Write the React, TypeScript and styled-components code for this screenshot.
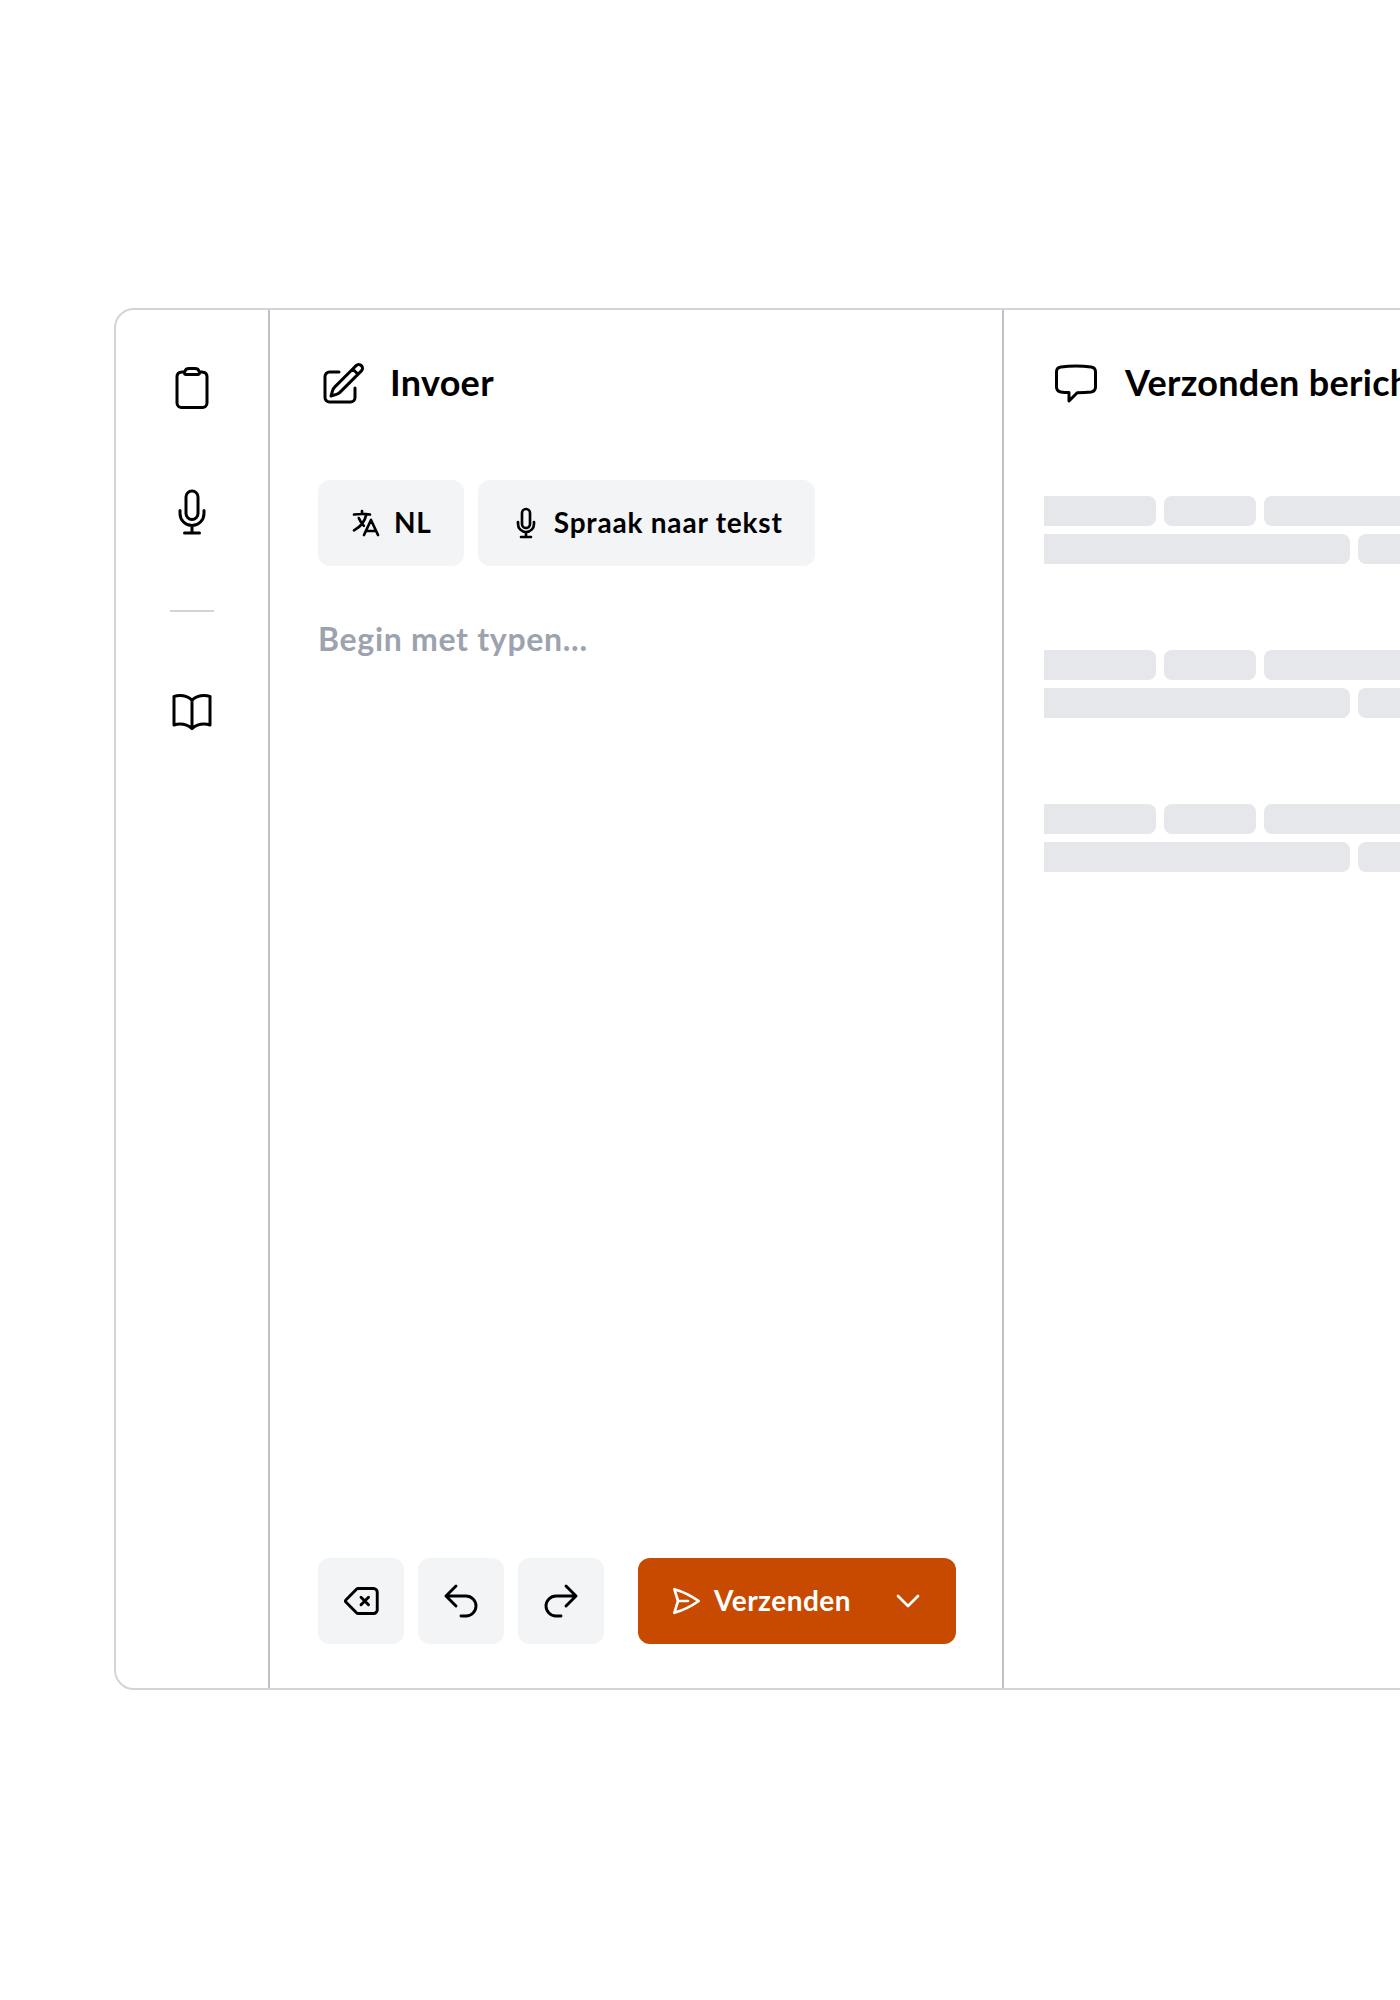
import { ReactNode } from 'react';
import styled, { createGlobalStyle } from 'styled-components';
import {
  HiOutlineArrowUturnLeft,
  HiOutlineArrowUturnRight,
  HiOutlineBackspace,
  HiOutlineBookOpen,
  HiOutlineChevronDown,
  HiOutlineClipboard,
  HiOutlineLanguage,
  HiOutlineMicrophone,
  HiOutlinePaperAirplane,
  HiOutlinePencilSquare,
} from 'react-icons/hi2';

const GlobalStyle = createGlobalStyle`
  html, body {
    margin: 0;
    height: 2000px;
    overflow: hidden;
    background: #fff;
  }
  body {
    font-family: "Lato", "Noto Sans", sans-serif;
    color: #000;
  }
`;

const Page = styled.div`
  padding: 308px 0 0 114px;
`;

const Card = styled.div`
  display: flex;
  width: 1500px;
  height: 1382px;
  box-sizing: border-box;
  border: 2px solid #d1d5db;
  border-radius: 20px;
  overflow: hidden;
`;

const Sidebar = styled.nav`
  flex: 0 0 152px;
  display: flex;
  flex-direction: column;
  align-items: center;
  gap: 76px;
  padding-top: 54px;
  border-right: 2px solid #c0c1c4;
  svg {
    display: block;
    font-size: 48px;
  }
`;

const SidebarRule = styled.hr`
  width: 44px;
  height: 2px;
  margin: -2px 0 0;
  border: 0;
  background: #d1d5db;
`;

const InputPanel = styled.section`
  flex: 0 0 732px;
  box-sizing: border-box;
  display: flex;
  flex-direction: column;
  padding: 48px 46px 44px 48px;
  border-right: 2px solid #c0c1c4;
`;

const MessagesPanel = styled.section`
  flex: 1;
  min-width: 0;
  padding: 48px 0 0 40px;
`;

const Header = styled.header<{ $inset?: boolean }>`
  display: flex;
  align-items: center;
  gap: ${(p) => (p.$inset ? '25px' : '24px')};
  height: 48px;
  margin-left: ${(p) => (p.$inset ? '8px' : '0')};
  svg {
    flex: none;
    font-size: 48px;
  }
`;

const PencilIcon = styled(HiOutlinePencilSquare)`
  transform: translate(1px, 2px);
`;

const Title = styled.h2`
  margin: 0;
  font-size: 36px;
  font-weight: 700;
  line-height: 48px;
  letter-spacing: 0.3px;
  white-space: nowrap;
`;

const Pills = styled.div`
  display: flex;
  gap: 14px;
  margin-top: 74px;
`;

const Pill = styled.button`
  display: flex;
  align-items: center;
  gap: 12px;
  height: 86px;
  padding: 0 32px;
  border: 0;
  border-radius: 12px;
  background: #f3f4f6;
  font: 700 28px "Lato", sans-serif;
  letter-spacing: 0.8px;
  color: #000;
  svg {
    font-size: 32px;
    stroke-width: 2;
  }
`;

const ButtonLabel = styled.span`
  margin-top: -2px;
`;

const Placeholder = styled.div`
  margin-top: 53px;
  font-size: 32px;
  font-weight: 700;
  line-height: 40px;
  letter-spacing: 0.7px;
  color: #9ca3af;
`;

const Toolbar = styled.div`
  display: flex;
  gap: 14px;
  margin-top: auto;
`;

const IconButton = styled.button`
  display: flex;
  align-items: center;
  justify-content: center;
  width: 86px;
  height: 86px;
  padding: 0;
  border: 0;
  border-radius: 12px;
  background: #f3f4f6;
  color: #000;
  svg {
    font-size: 40px;
    stroke-width: 1.75;
  }
`;

const SendButton = styled.button`
  display: flex;
  align-items: center;
  width: 318px;
  height: 86px;
  margin-left: 20px;
  padding: 0 32px;
  box-sizing: border-box;
  border: 0;
  border-radius: 12px;
  background: #c74a00;
  color: #fff;
  font: 700 28px "Lato", sans-serif;
  letter-spacing: 0.5px;
  svg {
    flex: none;
    font-size: 32px;
    stroke-width: 2;
  }
`;

const SendLabel = styled(ButtonLabel)`
  margin-left: 12px;
  margin-right: auto;
`;

const Skeletons = styled.div`
  display: flex;
  flex-direction: column;
  gap: 86px;
  margin-top: 90px;
`;

const SkeletonGroup = styled.div`
  display: flex;
  flex-direction: column;
  gap: 8px;
`;

const SkeletonRow = styled.div`
  display: flex;
  gap: 8px;
`;

const SkeletonBar = styled.div<{ $width: number }>`
  flex: 0 0 ${(p) => p.$width}px;
  height: 30px;
  border-radius: 8px;
  background: #e5e7eb;
  &:first-child {
    border-radius: 0 8px 8px 0;
  }
`;

const skeletonRows = [
  [112, 92, 300],
  [306, 200],
];

function Skeleton() {
  return (
    <SkeletonGroup>
      {skeletonRows.map((row, i) => (
        <SkeletonRow key={i}>
          {row.map((w, j) => (
            <SkeletonBar key={j} $width={w} />
          ))}
        </SkeletonRow>
      ))}
    </SkeletonGroup>
  );
}

function Tool({ children }: { children: ReactNode }) {
  return <IconButton type="button">{children}</IconButton>;
}

// speech bubble with the tail left of centre, the hi2 ones have it elsewhere
function BubbleIcon() {
  return (
    <svg width="1em" height="1em" viewBox="0 0 24 24" fill="none" stroke="currentColor" strokeWidth="1.5" strokeLinejoin="round">
      <path d="M8.5 17.3c-1.4-.05-2.8-.15-4.1-.35C3.1 16.75 2.25 15.7 2.25 14.5V7c0-1.2.85-2.25 2.15-2.45C6.9 4.2 9.4 4 12 4s5.1.2 7.6.55c1.3.2 2.15 1.25 2.15 2.45v7.5c0 1.2-.85 2.25-2.15 2.45-2.3.3-4.6.4-7 .4L8.5 21.5z" />
    </svg>
  );
}

export default function App() {
  return (
    <Page>
      <GlobalStyle />
      <Card>
        <Sidebar>
          <HiOutlineClipboard />
          <HiOutlineMicrophone />
          <SidebarRule />
          <HiOutlineBookOpen />
        </Sidebar>
        <InputPanel>
          <Header>
            <PencilIcon />
            <Title>Invoer</Title>
          </Header>
          <Pills>
            <Pill type="button">
              <HiOutlineLanguage />
              <ButtonLabel>NL</ButtonLabel>
            </Pill>
            <Pill type="button">
              <HiOutlineMicrophone />
              <ButtonLabel>Spraak naar tekst</ButtonLabel>
            </Pill>
          </Pills>
          <Placeholder>Begin met typen...</Placeholder>
          <Toolbar>
            <Tool>
              <HiOutlineBackspace />
            </Tool>
            <Tool>
              <HiOutlineArrowUturnLeft />
            </Tool>
            <Tool>
              <HiOutlineArrowUturnRight />
            </Tool>
            <SendButton type="button">
              <HiOutlinePaperAirplane />
              <SendLabel>Verzenden</SendLabel>
              <HiOutlineChevronDown />
            </SendButton>
          </Toolbar>
        </InputPanel>
        <MessagesPanel>
          <Header $inset>
            <BubbleIcon />
            <Title>Verzonden berichten</Title>
          </Header>
          <Skeletons>
            <Skeleton />
            <Skeleton />
            <Skeleton />
          </Skeletons>
        </MessagesPanel>
      </Card>
    </Page>
  );
}
